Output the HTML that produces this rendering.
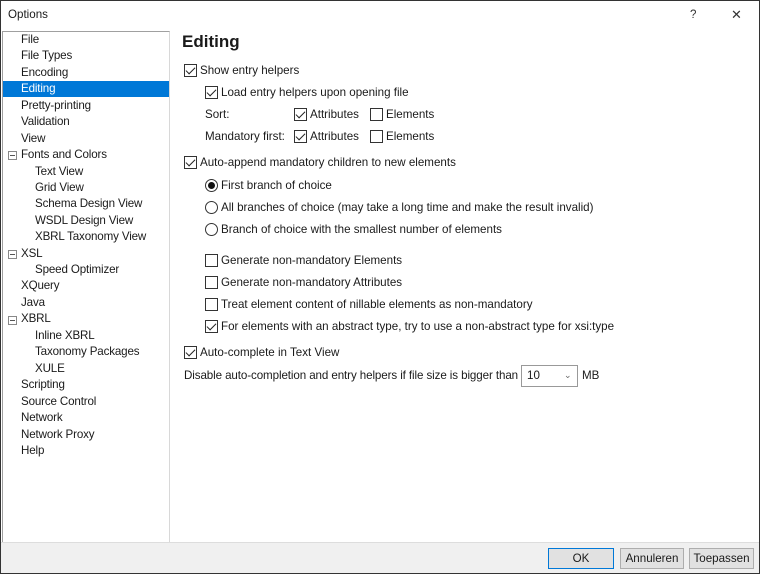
<!DOCTYPE html>
<html><head><style>
*{margin:0;padding:0;box-sizing:border-box}
body{width:760px;height:574px;background:#fff;font-family:"Liberation Sans",sans-serif;font-size:11.6px;color:#1a1a1a;position:relative;overflow:hidden}
.frame{position:absolute;left:0;top:0;width:760px;height:574px;border:1px solid #333}
.a{position:absolute;white-space:nowrap;line-height:14px}
.tree{position:absolute;left:2px;top:31px;width:168px;height:512px;border:1px solid #a0a0a0;border-right:1px solid #d8d8d8}
.sel{position:absolute;left:3px;top:81px;width:166px;height:16px;background:#0078d7}
.cb{position:absolute;width:13px;height:13px;border:1px solid #333;background:#fff}
.cb.c::after{content:"";position:absolute;left:3px;top:0px;width:4px;height:8px;border:solid #222;border-width:0 1.2px 1.2px 0;transform:rotate(45deg)}
.rb{position:absolute;width:13px;height:13px;border:1px solid #333;border-radius:50%;background:#fff}
.rb.c::after{content:"";position:absolute;left:2px;top:2px;width:7px;height:7px;border-radius:50%;background:#111}
.ex{position:absolute;width:9px;height:9px;border:1px solid #888}
.ex::after{content:"";position:absolute;left:1px;top:3px;width:5px;height:1px;background:#555}
.bot{position:absolute;left:1px;top:542px;width:758px;height:31px;background:#f0f0f0;border-top:1px solid #ddd}
.btn{position:absolute;top:548px;height:21px;border:1px solid #adadad;background:#e1e1e1;text-align:center;line-height:19px}
.tr{letter-spacing:-0.15px}
</style></head><body>
<div class="frame"></div>
<div class="a" style="left:8px;top:8px">Options</div>
<div class="a" style="left:690px;top:8px;color:#333">?</div>
<div class="a" style="left:731px;top:8px;font-size:13px;color:#333">✕</div>
<div class="tree"></div>
<div class="sel"></div>
<div class="tr">
<div class="a" style="left:21px;top:33px">File</div>
<div class="a" style="left:21px;top:49px">File Types</div>
<div class="a" style="left:21px;top:66px">Encoding</div>
<div class="a" style="left:21px;top:82px;color:#fff">Editing</div>
<div class="a" style="left:21px;top:99px">Pretty-printing</div>
<div class="a" style="left:21px;top:115px">Validation</div>
<div class="a" style="left:21px;top:132px">View</div>
<div class="ex" style="left:8px;top:151px"></div>
<div class="a" style="left:21px;top:148px">Fonts and Colors</div>
<div class="a" style="left:35px;top:165px">Text View</div>
<div class="a" style="left:35px;top:181px">Grid View</div>
<div class="a" style="left:35px;top:197px">Schema Design View</div>
<div class="a" style="left:35px;top:214px">WSDL Design View</div>
<div class="a" style="left:35px;top:230px">XBRL Taxonomy View</div>
<div class="ex" style="left:8px;top:250px"></div>
<div class="a" style="left:21px;top:247px">XSL</div>
<div class="a" style="left:35px;top:263px">Speed Optimizer</div>
<div class="a" style="left:21px;top:279px">XQuery</div>
<div class="a" style="left:21px;top:296px">Java</div>
<div class="ex" style="left:8px;top:316px"></div>
<div class="a" style="left:21px;top:312px">XBRL</div>
<div class="a" style="left:35px;top:329px">Inline XBRL</div>
<div class="a" style="left:35px;top:345px">Taxonomy Packages</div>
<div class="a" style="left:35px;top:362px">XULE</div>
<div class="a" style="left:21px;top:378px">Scripting</div>
<div class="a" style="left:21px;top:395px">Source Control</div>
<div class="a" style="left:21px;top:411px">Network</div>
<div class="a" style="left:21px;top:428px">Network Proxy</div>
<div class="a" style="left:21px;top:444px">Help</div>
</div>

<div class="a" style="left:182px;top:32px;font-size:17px;font-weight:bold;line-height:20px">Editing</div>
<div class="cb c" style="left:184px;top:64px"></div><div class="a" style="left:200px;top:64px">Show entry helpers</div>
<div class="cb c" style="left:205px;top:86px"></div><div class="a" style="left:221px;top:86px">Load entry helpers upon opening file</div>
<div class="a" style="left:205px;top:108px">Sort:</div>
<div class="cb c" style="left:294px;top:108px"></div><div class="a" style="left:310px;top:108px">Attributes</div>
<div class="cb" style="left:370px;top:108px"></div><div class="a" style="left:386px;top:108px">Elements</div>
<div class="a" style="left:205px;top:130px">Mandatory first:</div>
<div class="cb c" style="left:294px;top:130px"></div><div class="a" style="left:310px;top:130px">Attributes</div>
<div class="cb" style="left:370px;top:130px"></div><div class="a" style="left:386px;top:130px">Elements</div>
<div class="cb c" style="left:184px;top:156px"></div><div class="a" style="left:200px;top:156px">Auto-append mandatory children to new elements</div>
<div class="rb c" style="left:205px;top:179px"></div><div class="a" style="left:221px;top:179px">First branch of choice</div>
<div class="rb" style="left:205px;top:201px"></div><div class="a" style="left:221px;top:201px">All branches of choice (may take a long time and make the result invalid)</div>
<div class="rb" style="left:205px;top:223px"></div><div class="a" style="left:221px;top:223px">Branch of choice with the smallest number of elements</div>
<div class="cb" style="left:205px;top:254px"></div><div class="a" style="left:221px;top:254px">Generate non-mandatory Elements</div>
<div class="cb" style="left:205px;top:276px"></div><div class="a" style="left:221px;top:276px">Generate non-mandatory Attributes</div>
<div class="cb" style="left:205px;top:298px"></div><div class="a" style="left:221px;top:298px">Treat element content of nillable elements as non-mandatory</div>
<div class="cb c" style="left:205px;top:320px"></div><div class="a" style="left:221px;top:320px">For elements with an abstract type, try to use a non-abstract type for xsi:type</div>
<div class="cb c" style="left:184px;top:346px"></div><div class="a" style="left:200px;top:346px">Auto-complete in Text View</div>
<div class="a" style="left:184px;top:369px;letter-spacing:-0.1px">Disable auto-completion and entry helpers if file size is bigger than</div>
<div style="position:absolute;left:521px;top:365px;width:57px;height:22px;border:1px solid #999;background:#fff"></div>
<div class="a" style="left:527px;top:369px">10</div>
<div class="a" style="left:564px;top:368px;font-size:9px;color:#666">&#8964;</div>
<div class="a" style="left:582px;top:369px">MB</div>

<div class="bot"></div>
<div class="btn" style="left:548px;width:66px;border:1px solid #0078d7">OK</div>
<div class="btn" style="left:620px;width:64px">Annuleren</div>
<div class="btn" style="left:689px;width:65px">Toepassen</div>
</body></html>
